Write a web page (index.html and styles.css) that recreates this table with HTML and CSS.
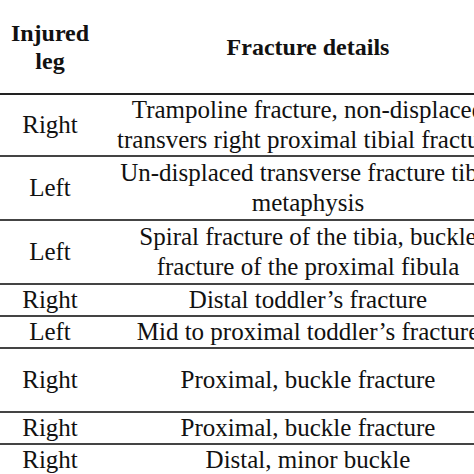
FILE: index.html
```html
<!DOCTYPE html>
<html>
<head>
<meta charset="utf-8">
<link rel="stylesheet" href="styles.css">
</head>
<body>
<table class="tbl">
  <thead>
    <tr class="r-head">
      <th class="c1">Injured<br>leg</th>
      <th class="c2">Fracture details</th>
    </tr>
  </thead>
  <tbody>
    <tr class="h62"><td class="c1">Right</td><td class="c2">Trampoline fracture, non-displaced<br>transvers right proximal tibial fracture</td></tr>
    <tr class="h64"><td class="c1">Left</td><td class="c2">Un-displaced transverse fracture tibia<br>metaphysis</td></tr>
    <tr class="h64"><td class="c1">Left</td><td class="c2">Spiral fracture of the tibia, buckle<br>fracture of the proximal fibula</td></tr>
    <tr class="h31"><td class="c1">Right</td><td class="c2">Distal toddler’s fracture</td></tr>
    <tr class="h32"><td class="c1">Left</td><td class="c2">Mid to proximal toddler’s fracture</td></tr>
    <tr class="h64"><td class="c1">Right</td><td class="c2">Proximal, buckle fracture</td></tr>
    <tr class="h32"><td class="c1">Right</td><td class="c2">Proximal, buckle fracture</td></tr>
    <tr class="h32"><td class="c1">Right</td><td class="c2">Distal, minor buckle</td></tr>
  </tbody>
</table>
</body>
</html>
```
FILE: styles.css
```css
html, body {
  margin: 0;
  padding: 0;
  background: #fff;
  overflow: hidden;
  width: 474px;
  height: 474px;
}
.tbl {
  border-collapse: collapse;
  font-family: "Liberation Serif", "Times New Roman", serif;
  font-size: 25px;
  color: #111;
  width: 516px;
  table-layout: fixed;
}
.tbl th, .tbl td {
  padding: 0;
  text-align: center;
  vertical-align: middle;
  line-height: 30px;
  white-space: nowrap;
}
.tbl .c1 { width: 100px; }
.tbl .c2 { width: 416px; }
.tbl th {
  font-weight: bold;
  font-size: 24px;
  line-height: 28px;
}
.r-head { height: 94px; }
.r-head th { border-bottom: 2px solid #222; }
.h62 { height: 62px; }
.h64 { height: 64px; }
.h31 { height: 31px; }
.h32 { height: 32px; }
.tbl tbody td { border-bottom: 2px solid #444; }
```
